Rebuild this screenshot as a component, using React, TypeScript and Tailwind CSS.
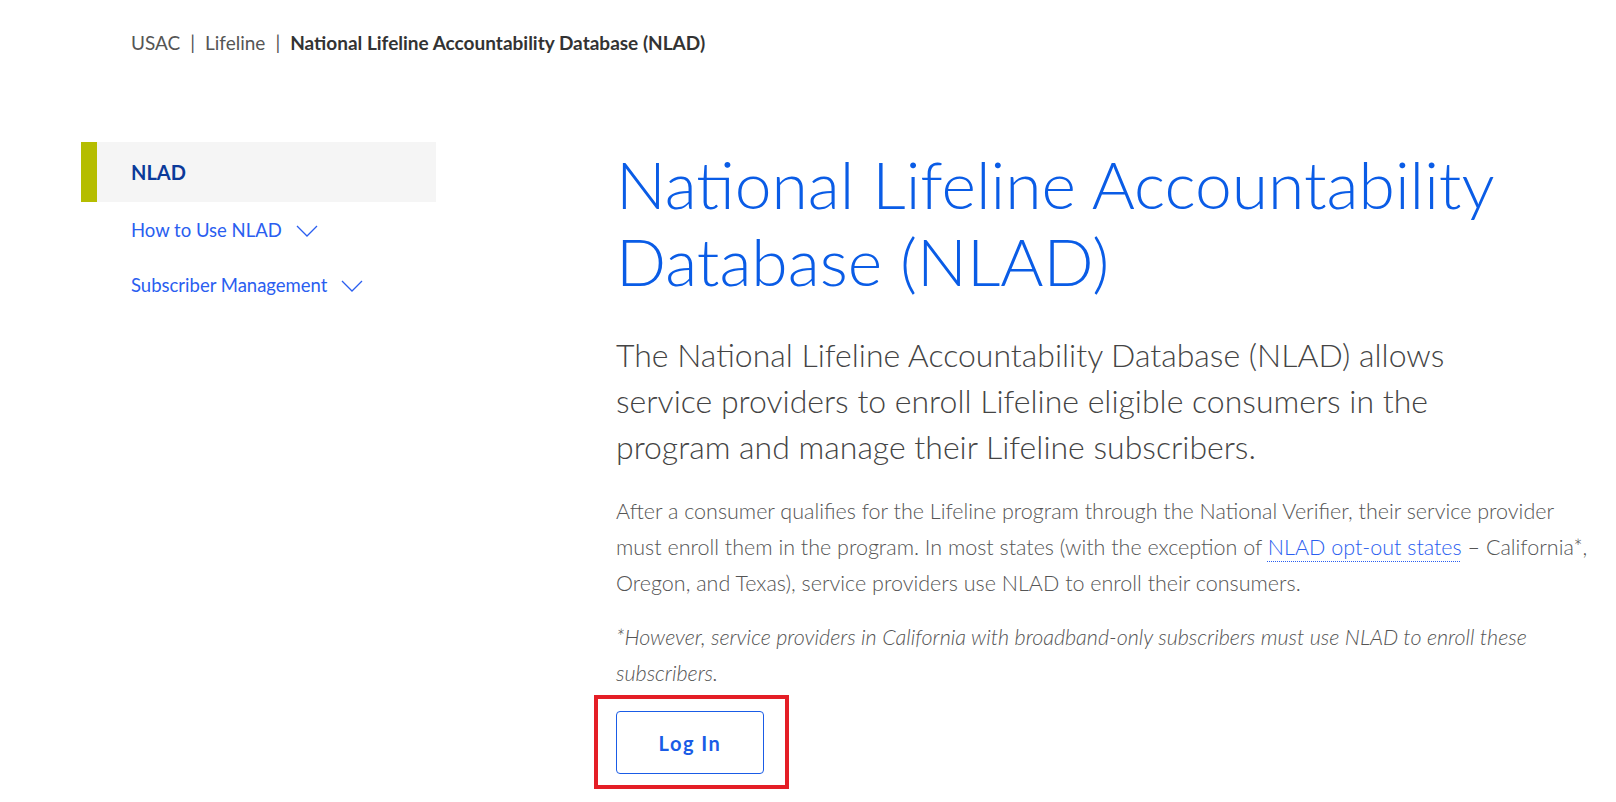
import React from "react";

function Chevron() {
  return (
    <svg width="22" height="12" viewBox="0 0 22 12" fill="none" className="ml-[14px] mt-[2px]">
      <polyline points="1,1 11,11 21,1" stroke="#2a5ef0" strokeWidth="1.3" />
    </svg>
  );
}

export default function App() {
  const links = ["How to Use NLAD", "Subscriber Management"];

  return (
    <div className="min-h-screen bg-white font-['Lato','Noto_Sans',sans-serif] text-[#555]">
      {/* breadcrumb */}
      <nav className="pl-[131px] pt-[30px] text-[19px] leading-[26px] flex items-center">
        <span className="text-[#555]">USAC</span>
        <span className="mx-[10px] text-[#555]">|</span>
        <span className="text-[#555]">Lifeline</span>
        <span className="mx-[10px] text-[#555]">|</span>
        <span className="font-bold text-[#333]">National Lifeline Accountability Database (NLAD)</span>
      </nav>

      <div className="flex mt-[86px]">
        <aside className="ml-[81px] w-[355px] shrink-0">
          <div className="h-[60px] bg-[#f5f5f5] border-l-[16px] border-[#b5bd00] pl-[34px] flex items-center">
            <span className="text-[20px] font-bold text-[#0b3a9a]">NLAD</span>
          </div>
          <ul className="pl-[50px] pt-[16px] flex flex-col gap-[31px]">
            {links.map((l) => (
              <li key={l} className="flex items-center text-[#2a5ef0] text-[18.5px] leading-[24px]">
                {l}
                <Chevron />
              </li>
            ))}
          </ul>
        </aside>

        <main className="ml-[180px] w-[975px]">
          <h1 className="text-[#0a5ce6] text-[66px] leading-[77px] font-light mt-[3px]">
            National Lifeline Accountability Database (NLAD)
          </h1>
          <p className="mt-[33px] w-[890px] text-[32px] leading-[46px] font-light text-[#444]">
            The National Lifeline Accountability Database (NLAD) allows service providers to enroll Lifeline eligible
            consumers in the program and manage their Lifeline subscribers.
          </p>
          <p className="mt-[23px] text-[21.5px] leading-[36px] font-light text-[#555]">
            After a consumer qualifies for the Lifeline program through the National Verifier, their service provider
            must enroll them in the program. In most states (with the exception of{" "}
            <a className="text-[#2a5ef0] underline decoration-dotted decoration-[#2a5ef0] decoration-1 underline-offset-[6px]">
              NLAD opt-out states
            </a>{" "}
            – California*, Oregon, and Texas), service providers use NLAD to enroll their consumers.
          </p>
          <p className="mt-[18px] w-[950px] text-[21.5px] leading-[36px] font-light italic text-[#555]">
            *However, service providers in California with broadband-only subscribers must use NLAD to enroll these
            subscribers.
          </p>
          <div className="inline-block -ml-[22px] mt-[4px] border-4 border-[#e41e26] pl-[18px] pr-[21px] pt-[12px] pb-[11px]">
            <button className="w-[148px] h-[63px] border border-[#1a5ce6] rounded-[4px] text-[#1a5ce6] text-[20px] font-bold tracking-[1.5px]">
              Log In
            </button>
          </div>
        </main>
      </div>
    </div>
  );
}
